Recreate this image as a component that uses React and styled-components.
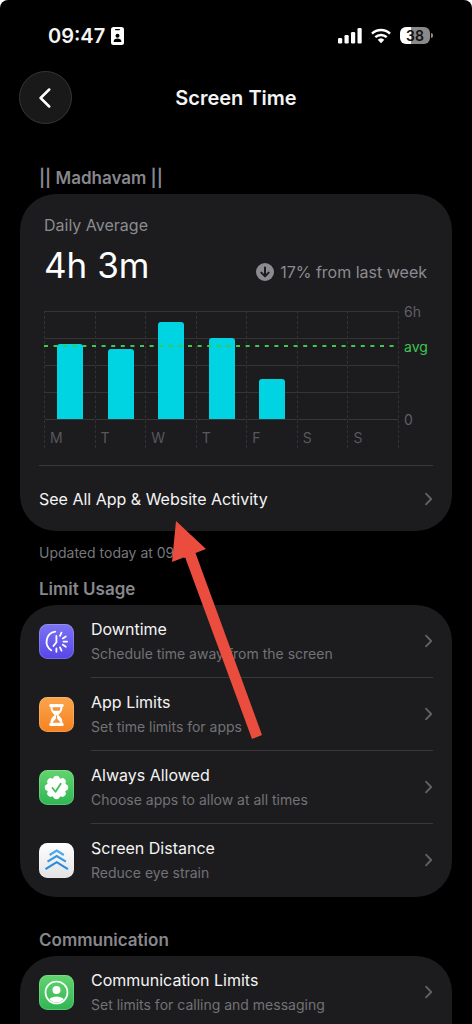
import React from "react";
import styled, { createGlobalStyle } from "styled-components";

const GlobalStyle = createGlobalStyle`
  * { box-sizing: border-box; }
  body { margin: 0; background: #fff; }
  h1, h2, p { margin: 0; }
`;

const Screen = styled.div`
  display: flex;
  flex-direction: column;
  height: 100vh;
  overflow: hidden;
  border-radius: 8px 8px 0 0;
  background: #000;
  color: #f4f4f5;
  font-family: Inter, "Liberation Sans", sans-serif;
`;

const StatusBar = styled.div`
  display: flex;
  align-items: center;
  justify-content: space-between;
  flex: none;
  height: 71px;
  padding: 0 39px 0 48px;
`;

const StatusGroup = styled.div`
  display: flex;
  align-items: center;
  gap: ${(p) => p.$gap}px;
`;

const Clock = styled.span`
  font-size: 20px;
  line-height: 24px;
  font-weight: 600;
`;

const Battery = styled.span`
  display: flex;
  align-items: center;
  gap: 1px;
`;

const BatteryBody = styled.span`
  width: 30px;
  height: 17px;
  border-radius: 6px;
  background: linear-gradient(90deg, #fff 38%, #8a8a8a 38%);
  color: #111;
  font-size: 14px;
  line-height: 17px;
  font-weight: 600;
  text-align: center;
`;

const BatteryTip = styled.span`
  width: 2px;
  height: 5px;
  border-radius: 0 2px 2px 0;
  background: #8a8a8a;
`;

const NavBar = styled.header`
  display: grid;
  grid-template-columns: 53px 1fr 53px;
  align-items: center;
  flex: none;
  padding: 0 19px;
`;

const BackButton = styled.button`
  display: grid;
  place-items: center;
  width: 53px;
  height: 53px;
  padding: 0;
  border: 1px solid #363638;
  border-radius: 50%;
  background: #19191a;
  color: #fff;
`;

const Title = styled.h1`
  font-size: 20px;
  line-height: 24px;
  font-weight: 600;
  text-align: center;
`;

const Content = styled.main`
  position: relative;
  display: flex;
  flex-direction: column;
  flex: 1;
  min-height: 0;
  padding: 40px 20px 0;
  overflow: hidden;
`;

const SectionTitle = styled.h2`
  flex: none;
  padding: 0 19px;
  margin-bottom: 2px;
  color: #87878c;
  font-size: 17px;
  line-height: 28px;
  font-weight: 600;
`;

const Card = styled.section`
  flex: none;
  margin-bottom: ${(p) => p.$after || 0}px;
  padding: 0 19px;
  border-radius: ${(p) => (p.$continues ? "36px 36px 0 0" : "36px")};
  background: #1c1c1e;
`;

const Summary = styled.div`
  padding: 19px 6px 0 5px;
`;

const Label = styled.p`
  color: #8b8b90;
  font-size: 16px;
  line-height: 24px;
`;

const SummaryLine = styled.div`
  display: flex;
  align-items: center;
  justify-content: space-between;
`;

const Total = styled.p`
  color: #fff;
  font-size: 35px;
  line-height: 56px;
`;

const Trend = styled.p`
  display: flex;
  align-items: center;
  gap: 6px;
  padding-top: 14px;
  color: #8b8b90;
  font-size: 16px;
  line-height: 24px;
`;

const Chart = styled.div`
  display: grid;
  grid-template-columns: 1fr 28px;
  margin-top: 18px;
`;

const Plot = styled.div`
  position: relative;
  display: grid;
  grid-template-columns: repeat(7, 1fr);
  border-right: 1px dashed #323234;
`;

const Day = styled.div`
  border-left: 1px dashed #323234;
`;

const BarArea = styled.div`
  display: flex;
  align-items: flex-end;
  height: 109px;
  padding-left: 12px;
  border-bottom: 1px solid #38383a;
  background: repeating-linear-gradient(#343436 0 1px, transparent 1px 27px);
`;

const Bar = styled.div`
  width: 26px;
  border-radius: 3px 3px 0 0;
  background: #00d4e3;
`;

const DayName = styled.p`
  height: 28px;
  padding: 4px 0 0 5px;
  color: #58585c;
  font-size: 14px;
  line-height: 28px;
`;

const AverageLine = styled.svg`
  position: absolute;
  left: 0;
  top: 34px;
  width: 100%;
  height: 2px;
`;

const Scale = styled.div`
  position: relative;
  height: 109px;
`;

const ScaleMark = styled.span`
  position: absolute;
  left: 5px;
  top: ${(p) => p.$top}px;
  color: ${(p) => p.$color || "#5f5f63"};
  font-size: 14px;
  line-height: 20px;
  white-space: nowrap;
`;

const ActivityLink = styled.a`
  display: flex;
  align-items: center;
  justify-content: space-between;
  height: 66px;
  margin-top: 17px;
  border-top: 1px solid #38383a;
  color: inherit;
  font-size: 16px;
  text-decoration: none;
`;

const Note = styled.p`
  flex: none;
  padding: 0 19px;
  margin-bottom: 12px;
  color: #77777b;
  font-size: 14px;
  line-height: 20px;
`;

const Row = styled.a`
  display: flex;
  align-items: stretch;
  height: 73px;
  gap: 17px;
  color: inherit;
  text-decoration: none;
`;

const RowIcon = styled.svg`
  flex: none;
  align-self: center;
  width: 35px;
  height: 35px;
`;

const RowBody = styled.span`
  display: flex;
  align-items: center;
  justify-content: space-between;
  flex: 1;
  border-bottom: 1px solid #38383a;

  ${Row}:last-child & { border-bottom-color: transparent; }
`;

const RowText = styled.span`
  display: flex;
  flex-direction: column;
  gap: 2px;
`;

const RowTitle = styled.span`
  font-size: 16px;
  line-height: 24px;
`;

const RowDetail = styled.span`
  color: #727276;
  font-size: 14px;
  line-height: 22px;
`;

const Pointer = styled.svg`
  position: absolute;
  left: 170px;
  top: 396px;
  width: 94px;
  height: 220px;
  pointer-events: none;
`;

const Chevron = () => (
  <svg width="9" height="14" viewBox="0 0 9 14" fill="none" aria-hidden="true">
    <path d="M2 1.700 7.200 7 2 12.300" stroke="#636366" strokeWidth="1.800" strokeLinecap="round" strokeLinejoin="round" />
  </svg>
);

const Tile = ({ id, from, to, children }) => (
  <RowIcon viewBox="0 0 35 35" fill="none" aria-hidden="true">
    <defs>
      <linearGradient id={id} x1="0" y1="0" x2="0" y2="1">
        <stop stopColor={from} />
        <stop offset="1" stopColor={to} />
      </linearGradient>
    </defs>
    <rect width="35" height="35" rx="8.5" fill={`url(#${id})`} />
    <rect x=".5" y=".5" width="34" height="34" rx="8" stroke="#fff" strokeOpacity=".18" />
    {children}
  </RowIcon>
);

const DowntimeIcon = () => (
  <Tile id="downtime" from="#7d74f2" to="#5546e8">
    <g stroke="#fff" strokeWidth="1.8" strokeLinecap="round">
      <path d="M16.200 7.600A10.200 10.200 0 0 0 12.200 26.200" />
      <path d="M17.400 12v6.300l-3 3.700" strokeLinejoin="round" />
      <path d="m21 11.800 1.500-3.200M23.800 14.400l3-2M24.500 17.600h3.600M23.800 20.700l3 2M21 23.400l1.500 3.200M17.400 24.400v3.400" />
    </g>
  </Tile>
);

const HourglassIcon = () => (
  <Tile id="limits" from="#fba54c" to="#f58220">
    <path d="M11.700 7h11.600c1.900 0 1.900 2.800.2 3 0 3.900-1.600 5.700-4.200 8 2.600 2.300 4.200 3.900 4.200 8 1.700.2 1.700 3-.2 3H11.700c-1.900 0-1.900-2.800-.2-3 0-4.100 1.600-5.700 4.200-8-2.600-2.300-4.200-4.100-4.200-8-1.700-.2-1.700-3 .2-3Z" fill="#fff" />
    <path d="M13.500 10.200h8c-.1 1.500-.5 2.500-1.100 3.500h-5.800c-.6-1-1-2-1.100-3.500ZM17 18.500h1v3l3.700 4.300h-8.400l3.700-4.300Z" fill="#f69237" />
  </Tile>
);

const AllowedIcon = () => (
  <Tile id="allowed" from="#62d46f" to="#30b653">
    <g fill="#fff">
      <circle cx="17.500" cy="17.500" r="9.800" />
      {[0, 45, 90, 135, 180, 225, 270, 315].map((a) => (
        <circle key={a} cx="17.500" cy="9" r="3.200" transform={`rotate(${a} 17.500 17.500)`} />
      ))}
    </g>
    <path d="m13.500 18 3 3.700 5.200-8" stroke="#3fbf5c" strokeWidth="1.800" strokeLinecap="round" strokeLinejoin="round" />
  </Tile>
);

const DistanceIcon = () => (
  <Tile id="distance" from="#ffffff" to="#e2e2e4">
    <g strokeWidth="2.100" strokeLinejoin="miter">
      <path d="m10.600 12 7.100-4.500 7.100 4.500" stroke="#4aa9ee" />
      <path d="m8.500 18.700 9.200-5.700 9.200 5.700" stroke="#3398e8" />
      <path d="m6.500 26.200 11.200-7L28.900 26.200" stroke="#2b88dc" />
    </g>
  </Tile>
);

const ContactIcon = () => (
  <Tile id="contact" from="#62d46f" to="#30b653">
    <clipPath id="contact-ring"><circle cx="17.500" cy="17.500" r="10" /></clipPath>
    <circle cx="17.500" cy="17.500" r="11" stroke="#fff" strokeWidth="1.700" />
    <g fill="#fff" clipPath="url(#contact-ring)">
      <circle cx="17.500" cy="15" r="4" />
      <ellipse cx="17.500" cy="27" rx="8.500" ry="5.500" />
    </g>
  </Tile>
);

const week = [
  { name: "M", height: 75 },
  { name: "T", height: 70 },
  { name: "W", height: 97 },
  { name: "T", height: 81 },
  { name: "F", height: 40 },
  { name: "S", height: 0 },
  { name: "S", height: 0 },
];

const limitRows = [
  { icon: <DowntimeIcon />, title: "Downtime", detail: "Schedule time away from the screen" },
  { icon: <HourglassIcon />, title: "App Limits", detail: "Set time limits for apps" },
  { icon: <AllowedIcon />, title: "Always Allowed", detail: "Choose apps to allow at all times" },
  { icon: <DistanceIcon />, title: "Screen Distance", detail: "Reduce eye strain" },
];

const SettingRow = ({ icon, title, detail }) => (
  <Row href="#">
    {icon}
    <RowBody>
      <RowText>
        <RowTitle>{title}</RowTitle>
        <RowDetail>{detail}</RowDetail>
      </RowText>
      <Chevron />
    </RowBody>
  </Row>
);

export default function App() {
  return (
    <Screen>
      <GlobalStyle />
      <StatusBar>
        <StatusGroup $gap={6}>
          <Clock>09:47</Clock>
          <svg width="13" height="18" viewBox="0 0 13 18" aria-hidden="true">
            <rect width="13" height="18" rx="2.500" fill="#fff" />
            <rect x="4" y="2" width="5" height="1.200" rx=".6" fill="#000" />
            <circle cx="6.500" cy="8.800" r="2" fill="#000" />
            <path d="M2.700 15v-.8c0-1.600 1.700-2.600 3.800-2.600s3.800 1 3.800 2.600v.8Z" fill="#000" />
          </svg>
        </StatusGroup>
        <StatusGroup $gap={9}>
          <svg width="24" height="16" viewBox="0 0 24 16" fill="#fff" aria-hidden="true">
            <rect y="10" width="4.200" height="5.500" rx="1.200" />
            <rect x="6.500" y="7" width="4.200" height="8.500" rx="1.200" />
            <rect x="13" y="4" width="4.200" height="11.500" rx="1.200" />
            <rect x="19.500" y="0" width="4.200" height="15.500" rx="1.200" />
          </svg>
          <svg width="20" height="16" viewBox="0 0 20 16" fill="none" aria-hidden="true">
            <g stroke="#fff" strokeWidth="2.500">
              <path d="M1 5.600a13 13 0 0 1 18 0" />
              <path d="M4.300 9.200a8.200 8.200 0 0 1 11.400 0" />
            </g>
            <path d="M6.700 11.800a4.800 4.800 0 0 1 6.600 0L10 15.200Z" fill="#fff" />
          </svg>
          <Battery>
            <BatteryBody>38</BatteryBody>
            <BatteryTip />
          </Battery>
        </StatusGroup>
      </StatusBar>

      <NavBar>
        <BackButton aria-label="Back">
          <svg width="14" height="22" viewBox="0 0 14 22" fill="none" aria-hidden="true">
            <path d="M10.200 2.500 1.600 11l8.600 8.500" stroke="currentColor" strokeWidth="2.500" strokeLinecap="round" strokeLinejoin="round" />
          </svg>
        </BackButton>
        <Title>Screen Time</Title>
      </NavBar>

      <Content>
        <SectionTitle>|| Madhavam ||</SectionTitle>
        <Card $after={12}>
          <Summary>
            <Label>Daily Average</Label>
            <SummaryLine>
              <Total>4h 3m</Total>
              <Trend>
                <svg width="18" height="18" viewBox="0 0 18 18" fill="none" aria-hidden="true">
                  <circle cx="9" cy="9" r="9" fill="#8b8b90" />
                  <path d="M9 4.500v8.500M5.300 9.600 9 13.200l3.700-3.600" stroke="#1c1c1e" strokeWidth="2" strokeLinecap="round" strokeLinejoin="round" />
                </svg>
                17% from last week
              </Trend>
            </SummaryLine>
            <Chart>
              <Plot>
                {week.map((day, i) => (
                  <Day key={i}>
                    <BarArea>
                      <Bar style={{ height: day.height }} />
                    </BarArea>
                    <DayName>{day.name}</DayName>
                  </Day>
                ))}
                <AverageLine aria-hidden="true">
                  <line x1="0" y1="1" x2="100%" y2="1" stroke="#3fc653" strokeWidth="2" strokeDasharray="4 5.600" />
                </AverageLine>
              </Plot>
              <Scale>
                <ScaleMark $top={-9}>6h</ScaleMark>
                <ScaleMark $top={26} $color="#3fc653">avg</ScaleMark>
                <ScaleMark $top={99}>0</ScaleMark>
              </Scale>
            </Chart>
          </Summary>
          <ActivityLink href="#">
            See All App &amp; Website Activity
            <Chevron />
          </ActivityLink>
        </Card>
        <Note>Updated today at 09:47</Note>

        <SectionTitle>Limit Usage</SectionTitle>
        <Card $after={29}>
          {limitRows.map((row) => (
            <SettingRow key={row.title} {...row} />
          ))}
        </Card>

        <SectionTitle>Communication</SectionTitle>
        <Card $continues>
          <SettingRow icon={<ContactIcon />} title="Communication Limits" detail="Set limits for calling and messaging" />
        </Card>

        <Pointer viewBox="0 0 94 220" aria-hidden="true">
          <path d="M6 1 36 29 25.500 33 92 215 82 219 15 37 2 42Z" fill="#ea4d3d" />
        </Pointer>
      </Content>
    </Screen>
  );
}
